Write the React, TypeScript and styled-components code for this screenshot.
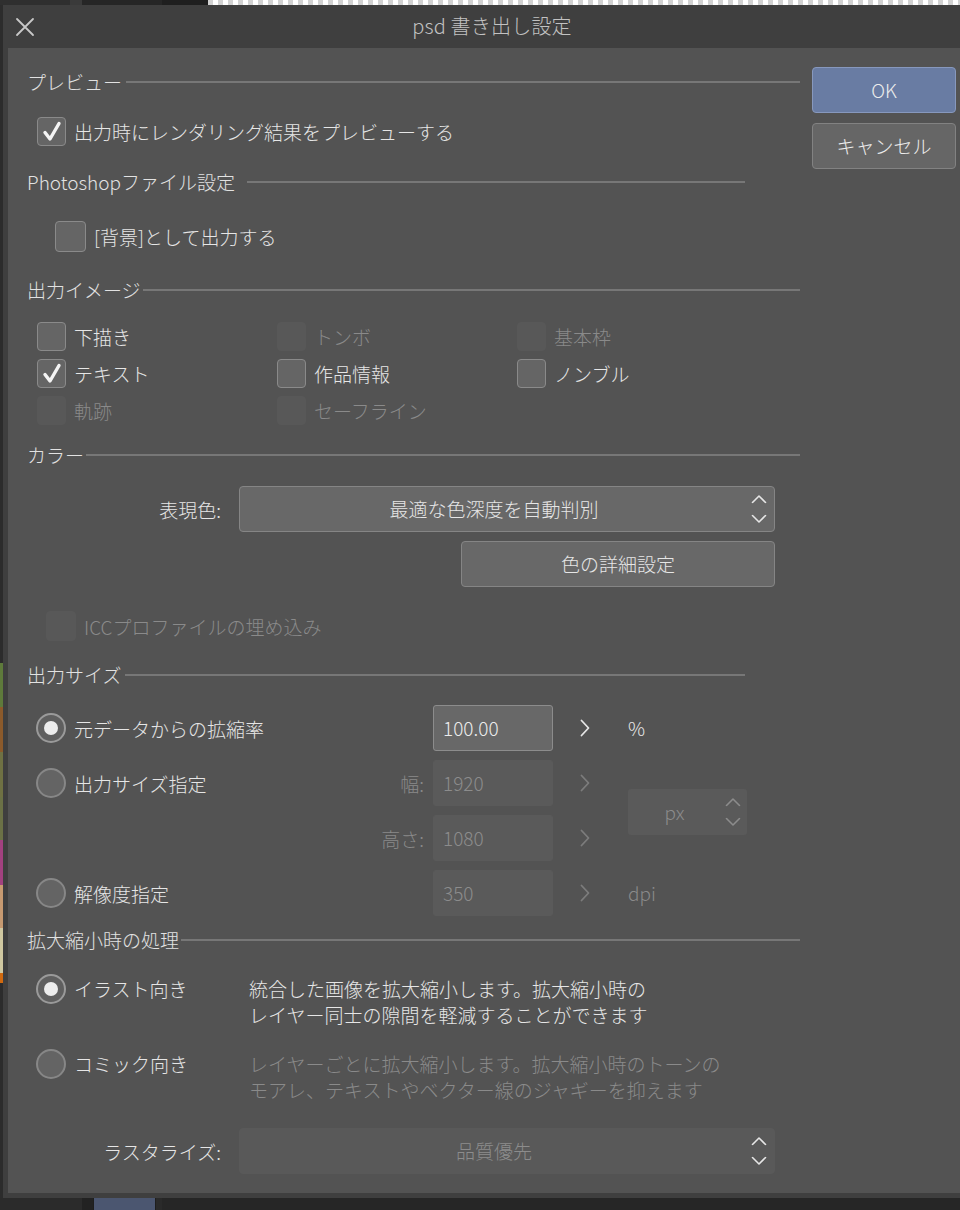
import React from "react";
import styled, { createGlobalStyle } from "styled-components";

const GlobalStyle = createGlobalStyle`
  html, body {
    margin: 0;
    padding: 0;
    background: #282828;
  }
  body {
    font-family: "Noto Sans CJK JP", "Noto Sans", sans-serif;
    font-weight: 300;
    -webkit-font-smoothing: antialiased;
  }
  * { box-sizing: border-box; }
`;

/* ---------- app chrome around the dialog ---------- */

const Screen = styled.div`
  width: 960px;
  height: 1210px;
  overflow: hidden;
  display: flex;
  flex-direction: column;
  background: #282828;
`;

const TopStrip = styled.div`
  height: 5px;
  flex-shrink: 0;
  display: flex;
`;

const StripSeg = styled.div<{ $w: number; $bg: string }>`
  width: ${(p) => p.$w}px;
  background: ${(p) => p.$bg};
`;

const Checker = styled.div`
  flex: 1;
  background: repeating-conic-gradient(#ffffff 0 25%, #d2d2d2 0 50%) 0 0 / 10px 10px;
`;

const Middle = styled.div`
  display: flex;
  flex: 1;
  min-height: 0;
`;

const Edge = styled.div`
  width: 3px;
  flex-shrink: 0;
  display: flex;
  flex-direction: column;
  background: #2c2c2c;
`;

const EdgeSeg = styled.div<{ $h: number; $bg: string }>`
  height: ${(p) => p.$h}px;
  flex-shrink: 0;
  background: ${(p) => p.$bg};
`;

const BottomStrip = styled.div`
  height: 12px;
  flex-shrink: 0;
  display: flex;
  background: #262626;
`;

const BottomSeg = styled.div<{ $w: number; $bg: string; $border?: string }>`
  width: ${(p) => p.$w}px;
  background: ${(p) => p.$bg};
  border-left: ${(p) => (p.$border ? `1px solid ${p.$border}` : "none")};
  border-right: ${(p) => (p.$border ? `1px solid ${p.$border}` : "none")};
`;

/* ---------- dialog window ---------- */

const Window = styled.div`
  flex: 1;
  display: flex;
  flex-direction: column;
  background: #3f3f3f;
  padding: 0 0 5px 0;
`;

const TitleBar = styled.div`
  height: 43px;
  flex-shrink: 0;
  position: relative;
  display: flex;
  align-items: center;
  justify-content: center;
  padding: 0 0 2px 21px;
  color: #c2c2c2;
  font-size: 20px;
  letter-spacing: 0.2px;
`;

const CloseButton = styled.button`
  position: absolute;
  left: 10px;
  top: 10px;
  width: 24px;
  height: 24px;
  padding: 0;
  border: none;
  background: transparent;
  display: flex;
  align-items: center;
  justify-content: center;
`;

const Body = styled.div`
  flex: 1;
  display: flex;
  margin-left: 5px;
  background: #535353;
`;

const MainColumn = styled.div`
  width: 792px;
  padding: 21px 0 0 19px;
  display: flex;
  flex-direction: column;
  color: #e6e6e6;
  font-size: 19px;
`;

const SideColumn = styled.div`
  width: 144px;
  margin-left: 12px;
  padding-top: 19px;
  display: flex;
  flex-direction: column;
  gap: 10px;
`;

const DialogButton = styled.button<{ $primary?: boolean }>`
  height: 46px;
  width: 100%;
  border-radius: 4px;
  border: 1px solid ${(p) => (p.$primary ? "#8798bd" : "#828282")};
  background: ${(p) => (p.$primary ? "#697ca3" : "#666666")};
  color: #ececec;
  font-family: inherit;
  font-weight: 300;
  font-size: 19px;
  padding: 0 0 2px;
`;

/* ---------- section headers ---------- */

const SectionHead = styled.div<{ $gap: number; $short?: boolean; $mt: number }>`
  display: flex;
  align-items: center;
  height: 24px;
  margin-top: ${(p) => p.$mt}px;
  margin-right: ${(p) => (p.$short ? 55 : 0)}px;
  color: #e2e2e2;
  white-space: nowrap;

  &::after {
    content: "";
    flex: 1;
    height: 2px;
    margin-left: ${(p) => p.$gap}px;
    margin-top: 1px;
    background: #777777;
  }
`;

/* ---------- checkboxes ---------- */

const CheckRow = styled.div<{ $indent: number; $mt: number; $disabled?: boolean }>`
  display: flex;
  align-items: center;
  gap: 8px;
  height: 30px;
  margin: ${(p) => p.$mt}px 0 0 ${(p) => p.$indent}px;
  color: ${(p) => (p.$disabled ? "#8a8a8a" : "#e6e6e6")};
  white-space: nowrap;
`;

const Box = styled.span<{ $disabled?: boolean; $size: number }>`
  width: ${(p) => p.$size}px;
  height: ${(p) => p.$size}px;
  flex-shrink: 0;
  border-radius: 4px;
  background: ${(p) => (p.$disabled ? "#585858" : "#656565")};
  border: 1px solid ${(p) => (p.$disabled ? "#585858" : "#8a8a8a")};
  display: flex;
  align-items: center;
  justify-content: center;
`;

const CheckGrid = styled.div`
  display: grid;
  grid-template-columns: 240px 240px 240px;
  row-gap: 7px;
  margin: 20px 0 0 10px;

  & > div {
    margin: 0;
  }
`;

/* ---------- selects and buttons ---------- */

const FieldRow = styled.div<{ $mt: number }>`
  display: flex;
  align-items: center;
  margin-top: ${(p) => p.$mt}px;
`;

const FieldLabel = styled.span`
  width: 212px;
  padding-right: 18px;
  text-align: right;
  color: #e6e6e6;
  white-space: nowrap;
`;

const SelectBox = styled.div<{ $disabled?: boolean; $w: number }>`
  position: relative;
  width: ${(p) => p.$w}px;
  height: 46px;
  border-radius: 4px;
  background: ${(p) => (p.$disabled ? "#595959" : "#686868")};
  border: 1px solid ${(p) => (p.$disabled ? "#595959" : "#858585")};
  color: ${(p) => (p.$disabled ? "#8c8c8c" : "#e6e6e6")};
  display: flex;
  align-items: center;
  justify-content: center;
  padding: 0 26px 2px 0;
`;

const Spinner = styled.span<{ $right: number }>`
  position: absolute;
  right: ${(p) => p.$right}px;
  top: 50%;
  transform: translateY(-50%);
  display: flex;
  flex-direction: column;
  gap: 11px;
`;

const WideButton = styled.div`
  margin: 9px 0 0 434px;
  width: 314px;
  height: 46px;
  border-radius: 4px;
  background: #686868;
  border: 1px solid #858585;
  color: #e6e6e6;
  display: flex;
  align-items: center;
  justify-content: center;
  padding-bottom: 2px;
`;

/* ---------- output size grid ---------- */

const SizeGrid = styled.div`
  display: grid;
  grid-template-columns: 397px 120px 75px 119px;
  grid-auto-rows: 46px;
  row-gap: 9px;
  margin: 19px 0 0 9px;
`;

const SizeLead = styled.div<{ $row: number }>`
  grid-column: 1;
  grid-row: ${(p) => p.$row};
  display: flex;
  align-items: center;
  justify-content: space-between;
  padding-right: 9px;
`;

const RadioOption = styled.div<{ $disabled?: boolean }>`
  display: flex;
  align-items: center;
  gap: 8px;
  height: 26px;
  white-space: nowrap;
  color: ${(p) => (p.$disabled ? "#8a8a8a" : "#e6e6e6")};
`;

const Radio = styled.span<{ $on?: boolean }>`
  width: 30px;
  height: 30px;
  flex-shrink: 0;
  border-radius: 50%;
  background: ${(p) => (p.$on ? "#5f5f5f" : "#646464")};
  border: 2px solid ${(p) => (p.$on ? "#9a9a9a" : "#878787")};
  display: flex;
  align-items: center;
  justify-content: center;

  &::after {
    content: "";
    display: ${(p) => (p.$on ? "block" : "none")};
    width: 14px;
    height: 14px;
    border-radius: 50%;
    background: #ececec;
  }
`;

const SubLabel = styled.span`
  color: #8a8a8a;
`;

const NumberInput = styled.div<{ $row: number; $disabled?: boolean }>`
  grid-column: 2;
  grid-row: ${(p) => p.$row};
  border-radius: 3px;
  background: ${(p) => (p.$disabled ? "#5a5a5a" : "#686868")};
  border: 1px solid ${(p) => (p.$disabled ? "#5a5a5a" : "#8c8c8c")};
  color: ${(p) => (p.$disabled ? "#8c8c8c" : "#ececec")};
  display: flex;
  align-items: center;
  padding: 0 0 2px 9px;
`;

const StepCell = styled.div<{ $row: number }>`
  grid-column: 3;
  grid-row: ${(p) => p.$row};
  display: flex;
  align-items: center;
  padding-left: 27px;
`;

const UnitCell = styled.div<{ $row: number; $disabled?: boolean }>`
  grid-column: 4;
  grid-row: ${(p) => p.$row};
  display: flex;
  align-items: center;
  padding-bottom: 2px;
  color: ${(p) => (p.$disabled ? "#8a8a8a" : "#e6e6e6")};
`;

const UnitSelect = styled.div`
  grid-column: 4;
  grid-row: 2 / 4;
  align-self: center;
  position: relative;
  height: 46px;
  margin-top: 3px;
  border-radius: 3px;
  background: #5a5a5a;
  color: #8c8c8c;
  display: flex;
  align-items: center;
  justify-content: center;
  padding: 0 26px 2px 0;
`;

/* ---------- scaling mode ---------- */

const ModeRow = styled.div<{ $mt: number }>`
  display: grid;
  grid-template-columns: 213px 1fr;
  line-height: 26px;
  margin: ${(p) => p.$mt}px 0 0 9px;
`;

const ModeText = styled.p<{ $disabled?: boolean }>`
  margin: 0;
  color: ${(p) => (p.$disabled ? "#8a8a8a" : "#e6e6e6")};
  white-space: nowrap;
`;

/* ---------- drawings ---------- */

const CheckMark = () => (
  <svg width="26" height="26" viewBox="0 0 26 26" fill="none">
    <path
      d="M6 14.5 L11 21 L20 5.5"
      stroke="#f4f4f4"
      strokeWidth="3.4"
      strokeLinecap="round"
      strokeLinejoin="round"
    />
  </svg>
);

const Chevron = ({ dir, color }: { dir: "up" | "down" | "right"; color: string }) => {
  if (dir === "right") {
    return (
      <svg width="10" height="18" viewBox="0 0 10 18" fill="none">
        <path d="M1.5 1.5 L8.5 9 L1.5 16.5" stroke={color} strokeWidth="1.8" strokeLinecap="round" strokeLinejoin="round" />
      </svg>
    );
  }
  return (
    <svg width="16" height="9" viewBox="0 0 16 9" fill="none">
      <path
        d={dir === "up" ? "M1.5 8 L8 1.5 L14.5 8" : "M1.5 1 L8 7.5 L14.5 1"}
        stroke={color}
        strokeWidth="1.6"
        strokeLinecap="round"
        strokeLinejoin="round"
      />
    </svg>
  );
};

const UpDown = ({ right, color }: { right: number; color: string }) => (
  <Spinner $right={right}>
    <Chevron dir="up" color={color} />
    <Chevron dir="down" color={color} />
  </Spinner>
);

const CloseIcon = () => (
  <svg width="20" height="20" viewBox="0 0 20 20" fill="none">
    <path d="M2 2 L18 18 M18 2 L2 18" stroke="#c8c8c8" strokeWidth="1.8" strokeLinecap="round" />
  </svg>
);

/* ---------- pieces ---------- */

type CheckProps = {
  label: string;
  checked?: boolean;
  disabled?: boolean;
  indent?: number;
  mt?: number;
  size?: number;
};

const Check = ({ label, checked, disabled, indent = 10, mt = 0, size = 29 }: CheckProps) => (
  <CheckRow $indent={indent} $mt={mt} $disabled={disabled}>
    <Box $disabled={disabled} $size={size}>
      {checked && <CheckMark />}
    </Box>
    <span>{label}</span>
  </CheckRow>
);

const edgeColors: [number, string][] = [
  [658, "#2c2c2c"],
  [44, "#5e7a3b"],
  [45, "#8b5a2b"],
  [45, "#6f7143"],
  [43, "#6b7146"],
  [45, "#a2417f"],
  [43, "#c79a71"],
  [45, "#d0c8a1"],
  [10, "#d0690f"],
];

export default function App() {
  return (
    <Screen>
      <GlobalStyle />
      <TopStrip>
        <StripSeg $w={70} $bg="#2f2f2f" />
        <StripSeg $w={12} $bg="#3a3a3a" />
        <StripSeg $w={80} $bg="#262626" />
        <StripSeg $w={46} $bg="#1f1f1f" />
        <Checker />
      </TopStrip>

      <Middle>
        <Edge>
          {edgeColors.map(([h, c], i) => (
            <EdgeSeg key={i} $h={h} $bg={c} />
          ))}
        </Edge>

        <Window>
          <TitleBar>
            <CloseButton aria-label="閉じる">
              <CloseIcon />
            </CloseButton>
            psd 書き出し設定
          </TitleBar>

          <Body>
            <MainColumn>
              <SectionHead $gap={4} $mt={0}>プレビュー</SectionHead>
              <Check label="出力時にレンダリング結果をプレビューする" checked mt={23} />

              <SectionHead $gap={12} $short $mt={23}>Photoshopファイル設定</SectionHead>
              <Check label="[背景]として出力する" indent={28} mt={28} size={31} />

              <SectionHead $gap={2} $mt={26}>出力イメージ</SectionHead>
              <CheckGrid>
                <Check label="下描き" />
                <Check label="トンボ" disabled />
                <Check label="基本枠" disabled />
                <Check label="テキスト" checked />
                <Check label="作品情報" />
                <Check label="ノンブル" />
                <Check label="軌跡" disabled />
                <Check label="セーフライン" disabled />
              </CheckGrid>

              <SectionHead $gap={2} $mt={17}>カラー</SectionHead>
              <FieldRow $mt={20}>
                <FieldLabel>表現色:</FieldLabel>
                <SelectBox $w={536}>
                  最適な色深度を自動判別
                  <UpDown right={7} color="#e6e6e6" />
                </SelectBox>
              </FieldRow>
              <WideButton>色の詳細設定</WideButton>
              <Check label="ICCプロファイルの埋め込み" disabled indent={19} mt={24} size={30} />

              <SectionHead $gap={4} $short $mt={21}>出力サイズ</SectionHead>
              <SizeGrid>
                <SizeLead $row={1}>
                  <RadioOption>
                    <Radio $on />
                    元データからの拡縮率
                  </RadioOption>
                </SizeLead>
                <NumberInput $row={1}>100.00</NumberInput>
                <StepCell $row={1}>
                  <Chevron dir="right" color="#e6e6e6" />
                </StepCell>
                <UnitCell $row={1}>%</UnitCell>

                <SizeLead $row={2}>
                  <RadioOption>
                    <Radio />
                    出力サイズ指定
                  </RadioOption>
                  <SubLabel>幅:</SubLabel>
                </SizeLead>
                <NumberInput $row={2} $disabled>1920</NumberInput>
                <StepCell $row={2}>
                  <Chevron dir="right" color="#7c7c7c" />
                </StepCell>
                <UnitSelect>
                  px
                  <UpDown right={6} color="#8c8c8c" />
                </UnitSelect>

                <SizeLead $row={3}>
                  <span />
                  <SubLabel>高さ:</SubLabel>
                </SizeLead>
                <NumberInput $row={3} $disabled>1080</NumberInput>
                <StepCell $row={3}>
                  <Chevron dir="right" color="#7c7c7c" />
                </StepCell>

                <SizeLead $row={4}>
                  <RadioOption>
                    <Radio />
                    解像度指定
                  </RadioOption>
                </SizeLead>
                <NumberInput $row={4} $disabled>350</NumberInput>
                <StepCell $row={4}>
                  <Chevron dir="right" color="#7c7c7c" />
                </StepCell>
                <UnitCell $row={4} $disabled>dpi</UnitCell>
              </SizeGrid>

              <SectionHead $gap={2} $mt={11}>拡大縮小時の処理</SectionHead>
              <ModeRow $mt={25}>
                <RadioOption>
                  <Radio $on />
                  イラスト向き
                </RadioOption>
                <div>
                  <ModeText>統合した画像を拡大縮小します。拡大縮小時の</ModeText>
                  <ModeText>レイヤー同士の隙間を軽減することができます</ModeText>
                </div>
              </ModeRow>
              <ModeRow $mt={23}>
                <RadioOption>
                  <Radio />
                  コミック向き
                </RadioOption>
                <div>
                  <ModeText $disabled>レイヤーごとに拡大縮小します。拡大縮小時のトーンの</ModeText>
                  <ModeText $disabled>モアレ、テキストやベクター線のジャギーを抑えます</ModeText>
                </div>
              </ModeRow>
              <FieldRow $mt={25}>
                <FieldLabel>ラスタライズ:</FieldLabel>
                <SelectBox $w={536} $disabled>
                  品質優先
                  <UpDown right={7} color="#e6e6e6" />
                </SelectBox>
              </FieldRow>
            </MainColumn>

            <SideColumn>
              <DialogButton $primary>OK</DialogButton>
              <DialogButton>キャンセル</DialogButton>
            </SideColumn>
          </Body>
        </Window>
      </Middle>

      <BottomStrip>
        <BottomSeg $w={82} $bg="#2b2b2b" />
        <BottomSeg $w={11} $bg="#222222" />
        <BottomSeg $w={63} $bg="#4b5670" $border="#1e1e1e" />
        <BottomSeg $w={6} $bg="#2a2a2a" />
      </BottomStrip>
    </Screen>
  );
}
